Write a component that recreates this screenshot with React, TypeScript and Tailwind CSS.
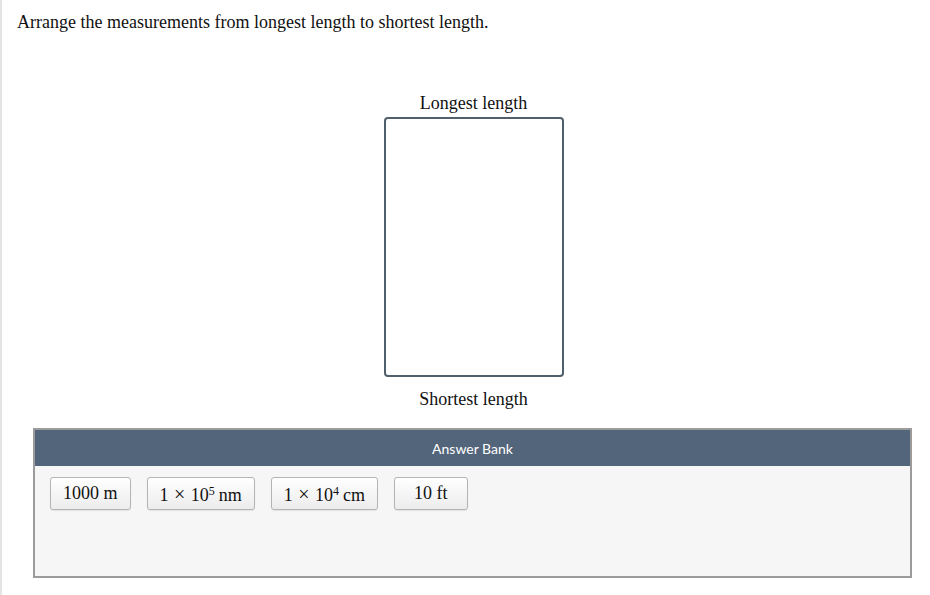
import React from 'react';

const serif = { fontFamily: '"Liberation Serif", "Times New Roman", serif' };

function Chip({ children, wide }: { children: React.ReactNode; wide?: boolean }) {
  return (
    <div
      className={
        'h-[33px] flex items-center rounded-[3px] border border-[#b4b4b4] bg-gradient-to-b from-[#ffffff] to-[#ececec] text-[18px] text-[#111] shadow-[0_1px_1px_rgba(0,0,0,0.08)] ' +
        (wide ? 'px-[19px]' : 'px-[12px]')
      }
      style={serif}
    >
      {children}
    </div>
  );
}

// scientific notation: 1 × 10^exp unit
function Sci({ exp, unit }: { exp: string; unit: string }) {
  return (
    <span className="whitespace-nowrap">
      1 <span className="text-[20px] mx-[1px]">×</span> 10<sup className="text-[12px]">{exp}</sup>
      <span className="ml-[4px]">{unit}</span>
    </span>
  );
}

export default function App() {
  return (
    <div className="w-[930px] h-[595px] bg-white border-l-2 border-[#e4e4e4] overflow-hidden">
      {/* prompt */}
      <p className="pl-[15px] pt-[11px] text-[18px] text-[#111] leading-[22px]" style={serif}>
        Arrange the measurements from longest length to shortest length.
      </p>

      {/* ranking target */}
      <div className="flex flex-col items-center mt-[59px] ml-[15px]" style={serif}>
        <div className="text-[18px] leading-[22px] text-[#111]">Longest length</div>
        <div className="mt-[3px] w-[180px] h-[260px] border-2 border-[#4f5f6b] rounded-[4px] bg-white" />
        <div className="mt-[11px] text-[18px] leading-[22px] text-[#111]">Shortest length</div>
      </div>

      {/* answer bank */}
      <div className="ml-[31px] mt-[18px] w-[879px] h-[150px] border-2 border-[#9b9b9b] bg-[#f6f6f6]">
        <div
          className="h-[36px] bg-[#53657a] flex items-center justify-center text-[14px] text-white"
          style={{ fontFamily: 'Lato, "Open Sans", sans-serif' }}
        >
          Answer Bank
        </div>
        <div className="flex gap-[16px] pl-[15px] pt-[11px]">
          <Chip>1000 m</Chip>
          <Chip>
            <Sci exp="5" unit="nm" />
          </Chip>
          <Chip>
            <Sci exp="4" unit="cm" />
          </Chip>
          <Chip wide>10 ft</Chip>
        </div>
      </div>
    </div>
  );
}
